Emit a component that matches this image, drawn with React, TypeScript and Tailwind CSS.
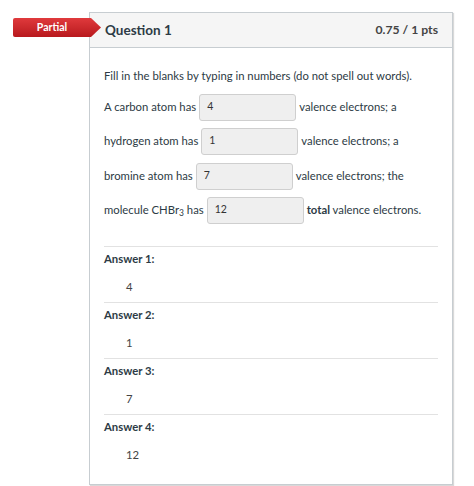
import React from "react";

function Blank({ value }: { value: string }) {
  return (
    <span className="mx-[3px] inline-flex h-[27px] w-[97px] shrink-0 items-start rounded-[3px] border border-[#cfcfcf] bg-[#efefef] px-[7px] pt-[4px] text-[10.5px] leading-[14px] text-[#333]">
      {value}
    </span>
  );
}

function Answer({ n, value, last }: { n: number; value: string; last?: boolean }) {
  return (
    <div className={last ? "border-t border-[#e2e2e2] pb-[21px]" : "border-t border-[#e2e2e2] pb-[7px]"}>
      <div className="mt-[4px] h-[16px] text-[11.3px] font-bold leading-[16px]">Answer {n}:</div>
      <div className="mt-[12px] h-[16px] pl-[22px] text-[11.3px] leading-[16px] text-[#444]">{value}</div>
    </div>
  );
}

export default function App() {
  return (
    <div
      className="relative h-[486px] w-[474px] bg-white text-[#2d3b45]"
      style={{ fontFamily: "Lato, 'Open Sans', sans-serif" }}
    >
      <div className="pl-[89px] pt-[12px]">
        <div className="w-[364px] border border-[#c7cdd1] shadow-[1px_1px_1px_rgba(0,0,0,0.15)]">
          <div className="flex h-[35px] items-center justify-between border-b border-[#c7cdd1] bg-[#f5f5f5] pl-[15px] pr-[14px]">
            <span className="text-[13.5px] font-bold">Question 1</span>
            <span className="text-[12.2px] font-bold text-[#444]">0.75 / 1 pts</span>
          </div>
          <div className="whitespace-nowrap px-[14px] pt-[18px] text-[11.3px]">
            <div className="h-[20px] leading-[20px]">
              Fill in the blanks by typing in numbers (do not spell out words).
            </div>
            <div className="mt-[4px] flex h-[34px] items-center">
              <span>A carbon atom has</span>
              <Blank value="4" />
              <span>valence electrons; a</span>
            </div>
            <div className="flex h-[35px] items-center">
              <span>hydrogen atom has</span>
              <Blank value="1" />
              <span>valence electrons; a</span>
            </div>
            <div className="flex h-[34px] items-center">
              <span>bromine atom has</span>
              <Blank value="7" />
              <span>valence electrons; the</span>
            </div>
            <div className="flex h-[34px] items-center">
              <span>
                molecule CHBr<sub className="text-[8.5px]">3</sub> has
              </span>
              <Blank value="12" />
              <span>
                <b className="font-bold">total</b> valence electrons.
              </span>
            </div>
            <div className="mt-[19px]">
              <Answer n={1} value="4" />
              <Answer n={2} value="1" />
              <Answer n={3} value="7" />
              <Answer n={4} value="12" last />
            </div>
          </div>
        </div>
      </div>
      <div className="absolute left-[13px] top-[18px] flex h-[19px] items-center">
        <div className="flex h-[19px] w-[78px] items-center justify-center rounded-l-[2px] bg-gradient-to-b from-[#e0393c] to-[#b8181d] text-[10.5px] font-bold text-white">
          Partial
        </div>
        <svg width="10" height="19" viewBox="0 0 10 19" className="block">
          <defs>
            <linearGradient id="rg" x1="0" y1="0" x2="0" y2="1">
              <stop offset="0" stopColor="#e0393c" />
              <stop offset="1" stopColor="#b8181d" />
            </linearGradient>
          </defs>
          <path d="M0 0 L10 9.5 L0 19 Z" fill="url(#rg)" />
        </svg>
      </div>
    </div>
  );
}
